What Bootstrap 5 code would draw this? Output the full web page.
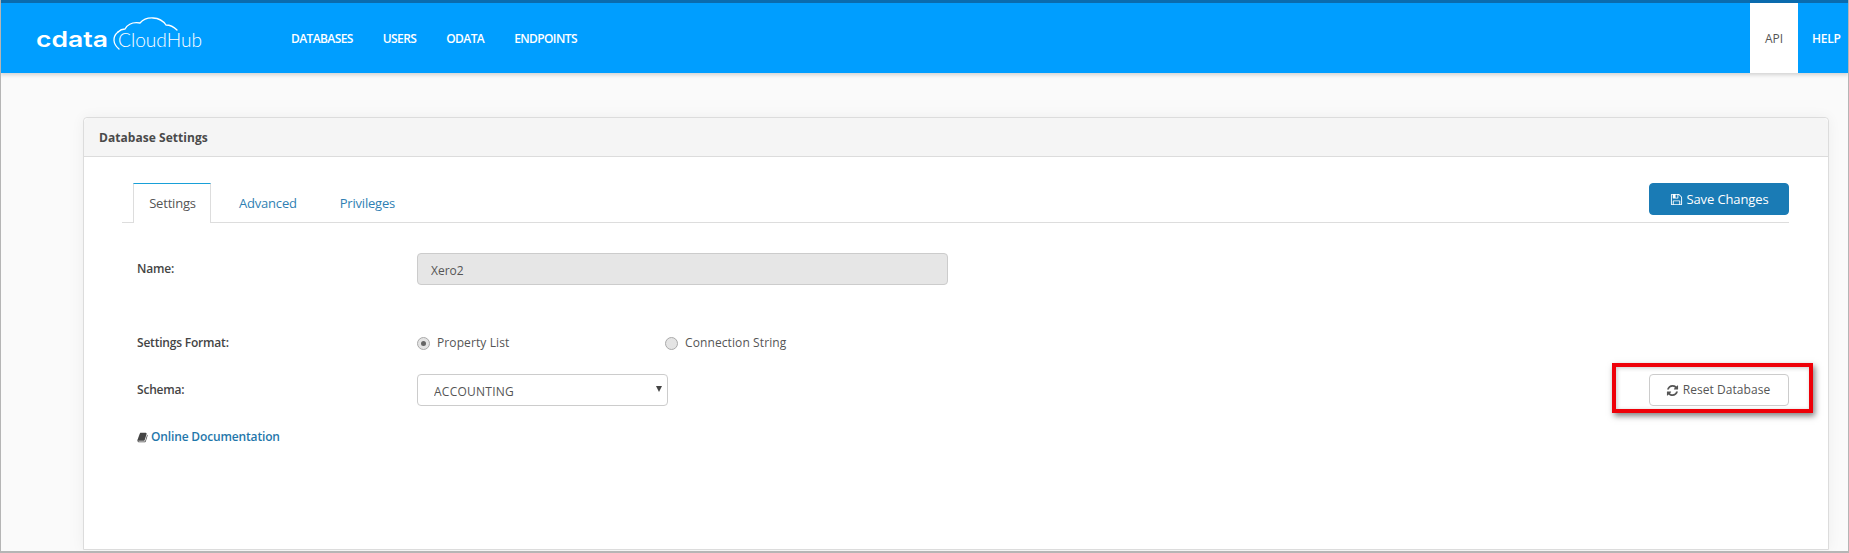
<!DOCTYPE html>
<html lang="en">
<head>
<meta charset="utf-8">
<title>Database Settings</title>
<link href="https://cdn.jsdelivr.net/npm/bootstrap@5.3.0/dist/css/bootstrap.min.css" rel="stylesheet">
<style>
html, body { height: 100%; }
body { font-family: "Open Sans", "Liberation Sans", sans-serif; font-size: 13px; color: #555; background: #fafafa; overflow: hidden; }
.frame { height: 553px; border: solid #b5b5b5; border-width: 0 1px 2px 1px; display: flex; flex-direction: column; overflow: hidden; }
.topbar { height: 73px; margin: 0 -1px; padding: 0; background: #009eff; border-top: 3px solid #0a6bae; box-shadow: 0 2px 4px rgba(0,0,0,.16); align-items: stretch; flex-wrap: nowrap; position: relative; z-index: 2; }
.logo-link { display: flex; align-items: center; margin: 0 0 0 30px; padding: 0; width: 180px; height: 70px; }
.logo-link svg { display: block; }
.main-links { gap: 0; margin-left: 66px; }
.topbar .nav-link { display: flex; align-items: center; color: #fff; font-size: 12px; font-weight: 600; text-transform: uppercase; letter-spacing: -.25px; padding: 1px 15px 0; }
.main-links .nav-link { padding: 1px 15px 0; letter-spacing: -.6px; }
.right-links .nav-link.api-active { background: #fff; color: #555; font-weight: 400; width: 48px; justify-content: center; padding: 1px 0 0; letter-spacing: 0; }
.right-links .nav-link.help-link { width: 51px; padding: 1px 0 0 14px; }
.content-wrap { padding: 44px 19px 0 82px; flex: 1 1 auto; min-height: 0; }
.settings-card { height: 433px; border: 1px solid #dcdcdc; border-radius: 4px 4px 0 0; box-shadow: 0 0 14px rgba(0,0,0,.05); }
.settings-card .card-header { height: 39px; padding: 1px 15px 0; display: flex; align-items: center; background: #f5f5f5; border-bottom: 1px solid #dcdcdc; font-size: 12px; font-weight: 700; color: #4a4a4a; letter-spacing: .05px; }
.settings-card .card-body { padding: 26px 39px 0 38px; }
.tab-row { height: 40px; border-bottom: 1px solid #ddd; padding-left: 11px; justify-content: space-between; align-items: flex-start; }
.tab-row .nav-tabs { border: 0; height: 39px; gap: 23px; }
.tab-row .nav-link { height: 40px; display: flex; align-items: center; color: #2f7fb3; border: 0; font-size: 13px; letter-spacing: -.2px; border-radius: 0; margin: 0; background: transparent; }
.tab-row .nav-link.tab-first { padding: 1px 0 0 1px; width: 78px; justify-content: center; color: #555; background: #fff; border: 1px solid #ddd; border-top: 1px solid #18a0d8; border-bottom: 0; }
.tab-row .nav-item + .nav-item .nav-link { padding: 1px 4px 0 5px; }
.tab-row .nav-item:last-child { margin-left: 11px; }
.btn-save { width: 140px; height: 32px; padding: 1px 0 0; background: #1a7bb5; border: 1px solid #1a7bb5; color: #fff; font-size: 13px; letter-spacing: -.12px; border-radius: 4px; display: flex; align-items: center; justify-content: center; gap: 4px; }
.btn-reset { width: 140px; height: 32px; padding: 0 2px 0 0; background: #fff; border: 1px solid #ccc; color: #555; font-size: 12px; letter-spacing: .05px; border-radius: 4px; display: flex; align-items: center; justify-content: center; gap: 4px; }
.field-row { display: flex; align-items: center; padding-left: 15px; }
.field-label { width: 280px; flex: none; margin: 0; font-size: 12px; font-weight: 600; color: #444; letter-spacing: -.2px; }
.name-row { margin-top: 30px; height: 32px; }
.format-row { margin-top: 42px; height: 32px; }
.schema-row { margin-top: 15px; height: 32px; justify-content: space-between; }
.schema-left { display: flex; align-items: center; }
.name-input { width: 531px; height: 32px; padding: 2px 13px 0; font-size: 12px; color: #555; background: #e6e6e6; border: 1px solid #ccc; border-radius: 4px; box-shadow: none; }
.name-input:disabled { background: #e6e6e6; opacity: 1; }
.schema-select { width: 251px; height: 32px; padding: 3px 14px 0 16px; font-size: 12px; letter-spacing: .25px; color: #555; border: 1px solid #ccc; border-radius: 4px; background-image: none; box-shadow: none; }
.select-holder { position: relative; }
.select-caret { position: absolute; right: 6px; top: 12px; width: 0; height: 0; border: 3.5px solid transparent; border-top: 6px solid #444; border-bottom: 0; pointer-events: none; }
.radio-set { display: flex; align-items: center; font-size: 12px; color: #555; letter-spacing: .1px; }
.radio-one { display: flex; align-items: center; gap: 7px; width: 248px; }
.radio-dot { width: 13px; height: 13px; border-radius: 50%; flex: none; border: 1px solid #aaa; background: #e4e4e4; position: relative; }
.radio-dot.is-on::after { content: ""; position: absolute; inset: 3px; border-radius: 50%; background: #666; }
.doc-link { display: inline-flex; align-items: center; gap: 3px; margin: 21px 0 0 15px; height: 20px; font-size: 12px; font-weight: 600; color: #1f77ab; text-decoration: none; letter-spacing: -.15px; }
.reset-holder { position: relative; }
.red-box { position: absolute; inset: -11px -24px -7px -37px; border: 4px solid #ee0008; box-shadow: 2px 3px 6px rgba(0,0,0,.5), inset 1px 1px 4px rgba(0,0,0,.22); pointer-events: none; }
.ico { fill: currentColor; flex: none; }
.ico-dark { color: #444; }
</style>
</head>
<body>
<div class="frame">
  <nav class="navbar topbar p-0 d-flex">
    <a class="logo-link navbar-brand" href="#" aria-label="cdata CloudHub">
      <svg width="180" height="44" viewBox="30 16 180 44">
        <g fill="none" stroke="#fff" stroke-width="1.3" stroke-linecap="round">
          <path d="M119 49 C113 44 112 37 118 32"/>
          <path d="M118 32 C120 30 122 29 125 29 C128 24 134 22 140 23 C146 16 160 16 166 25 C171 25 174 27 177 30"/>
        </g>
        <text x="36" y="47" font-family="Inter, 'Liberation Sans', sans-serif" font-size="22" font-weight="600" fill="#fff" textLength="72" lengthAdjust="spacingAndGlyphs">cdata</text>
        <text x="118" y="47" font-family="Lato, 'Liberation Sans', sans-serif" font-size="19" font-weight="300" fill="#fff" textLength="84" lengthAdjust="spacingAndGlyphs">CloudHub</text>
      </svg>
    </a>
    <ul class="nav main-links">
      <li class="nav-item d-flex"><a class="nav-link" href="#">Databases</a></li>
      <li class="nav-item d-flex"><a class="nav-link" href="#">Users</a></li>
      <li class="nav-item d-flex"><a class="nav-link" href="#">OData</a></li>
      <li class="nav-item d-flex"><a class="nav-link" href="#">Endpoints</a></li>
    </ul>
    <ul class="nav right-links ms-auto">
      <li class="nav-item d-flex"><a class="nav-link api-active" href="#">API</a></li>
      <li class="nav-item d-flex"><a class="nav-link help-link" href="#">Help</a></li>
    </ul>
  </nav>
  <div class="content-wrap">
    <div class="card settings-card">
      <div class="card-header">Database Settings</div>
      <div class="card-body">
        <div class="d-flex tab-row">
          <ul class="nav nav-tabs">
            <li class="nav-item"><a class="nav-link tab-first" href="#">Settings</a></li>
            <li class="nav-item"><a class="nav-link" href="#">Advanced</a></li>
            <li class="nav-item"><a class="nav-link" href="#">Privileges</a></li>
          </ul>
          <button type="button" class="btn btn-save">
            <svg class="ico" width="13" height="13" viewBox="0 0 1792 1792"><path d="M512 1536h768v-384h-768v384zm896 0h128v-896q0-14-10-38.5t-20-34.5l-281-281q-10-10-34-20t-39-10v416q0 40-28 68t-68 28h-576q-40 0-68-28t-28-68v-416h-128v1280h128v-416q0-40 28-68t68-28h832q40 0 68 28t28 68v416zm-384-928v-320q0-13-9.5-22.5t-22.5-9.5h-192q-13 0-22.5 9.5t-9.5 22.5v320q0 13 9.5 22.5t22.5 9.5h192q13 0 22.5-9.5t9.5-22.5zm640 32v928q0 40-28 68t-68 28h-1344q-40 0-68-28t-28-68v-1344q0-40 28-68t68-28h928q40 0 88 20t76 48l280 280q28 28 48 76t20 88z"/></svg>
            Save Changes
          </button>
        </div>
        <div class="field-row name-row">
          <label class="field-label" for="dbName">Name:</label>
          <input id="dbName" class="form-control name-input" value="Xero2" disabled>
        </div>
        <div class="field-row format-row">
          <span class="field-label">Settings Format:</span>
          <div class="radio-set">
            <span class="radio-one"><span class="radio-dot is-on"></span>Property List</span>
            <span class="radio-one"><span class="radio-dot"></span>Connection String</span>
          </div>
        </div>
        <div class="field-row schema-row">
          <div class="schema-left">
            <label class="field-label" for="schemaSel">Schema:</label>
            <div class="select-holder">
              <select id="schemaSel" class="form-select schema-select"><option>ACCOUNTING</option></select>
              <span class="select-caret"></span>
            </div>
          </div>
          <div class="reset-holder">
            <button type="button" class="btn btn-reset">
              <svg class="ico" width="13" height="13" viewBox="0 0 1792 1792"><path d="M1639 1056q0 5-1 7-64 268-268 434.5t-478 166.5q-146 0-282.5-55t-243.5-157l-129 129q-19 19-45 19t-45-19-19-45v-448q0-26 19-45t45-19h448q26 0 45 19t19 45-19 45l-137 137q71 66 161 102t187 36q134 0 250-65t186-179q11-17 53-117 8-23 30-23h192q13 0 22.5 9.5t9.5 22.5zm25-800v448q0 26-19 45t-45 19h-448q-26 0-45-19t-19-45 19-45l138-138q-148-137-349-137-134 0-250 65t-186 179q-11 17-53 117-8 23-30 23h-199q-13 0-22.5-9.5t-9.5-22.5v-7q65-268 270-434.5t480-166.5q146 0 284 55.5t245 156.5l130-129q19-19 45-19t45 19 19 45z"/></svg>
              Reset Database
            </button>
            <span class="red-box"></span>
          </div>
        </div>
        <a class="doc-link" href="#">
          <svg class="ico ico-dark" width="11" height="11" viewBox="0 0 1792 1792"><path d="M1703 478q40 57 18 129l-275 906q-19 64-76.5 107.5t-122.5 43.5h-923q-77 0-148.5-53.5t-99.5-131.5q-24-67-2-127 0-4 3-27t4-37q1-8-3-21.5t-3-19.5q2-11 8-21t16.5-23.5 16.5-23.5q23-38 45-91.5t30-91.5q3-10 .5-30t-.5-28q3-11 17-28t17-23q21-36 42-92t25-90q1-9-2.5-32t.5-28q4-13 22-30.5t22-22.5q19-26 42.5-84.5t27.5-96.5q1-8-3-25.5t-2-26.5q2-8 9-18t18-23 17-21q8-12 16.5-30.5t15-35 16-36 19.5-32 26.5-23.5 36-11.5 47.5 5.5l-1 3q38-9 51-9h761q74 0 114 56t18 130l-274 906q-36 119-71.5 153.5t-128.5 34.5h-869q-27 0-38 15-11 16-1 43 24 70 144 70h923q29 0 56-15.5t35-41.5l300-987q7-22 5-57 38 15 59 43z"/></svg>
          Online Documentation
        </a>
      </div>
    </div>
  </div>
</div>
<script src="https://cdn.jsdelivr.net/npm/bootstrap@5.3.0/dist/js/bootstrap.bundle.min.js"></script>
</body>
</html>
